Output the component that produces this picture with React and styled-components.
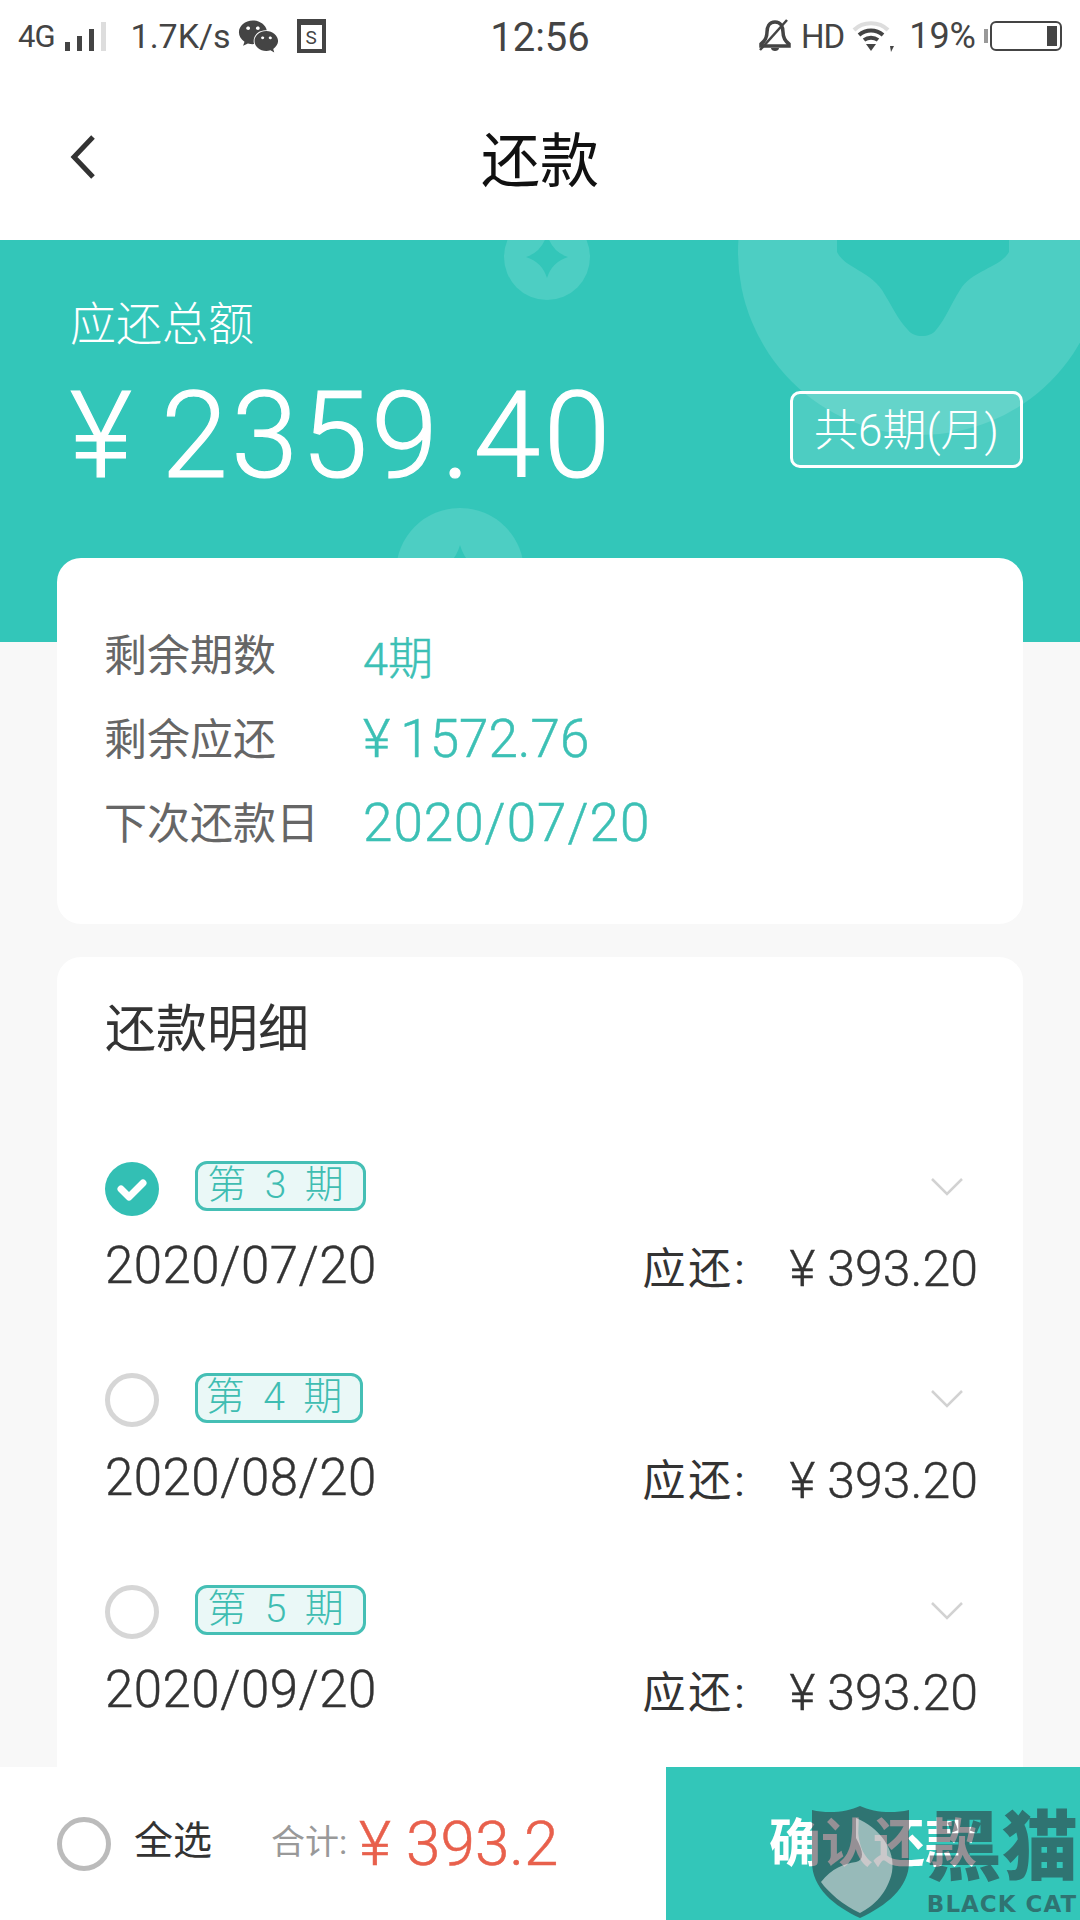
import styled, { createGlobalStyle } from "styled-components";
import { FaWeixin } from "react-icons/fa";

const rows = [
  { period: 3, date: "2020/07/20", checked: true, badge: 171 },
  { period: 4, date: "2020/08/20", checked: false, badge: 168 },
  { period: 5, date: "2020/09/20", checked: false, badge: 171 },
];

const info = [
  { label: "剩余期数", value: "4期", size: 45, spacing: 0 },
  { label: "剩余应还", value: "¥ 1572.76", size: 53, spacing: 0 },
  { label: "下次还款日", value: "2020/07/20", size: 53, spacing: 1 },
];

export default function App() {
  return (
    <Page>
      <GlobalStyle />
      <StatusBar>
        <StatusLeft>
          <Net>4G</Net>
          <Signal>
            <SignalBar $h={9} />
            <SignalBar $h={15} />
            <SignalBar $h={22} />
            <SignalBar $h={29} $off />
          </Signal>
          <Speed>1.7K/s</Speed>
          <FaWeixin size={41} />
          <SimBox>S</SimBox>
        </StatusLeft>
        <Clock>12:56</Clock>
        <StatusRight>
          <BellIcon />
          <Hd>HD</Hd>
          <WifiIcon />
          <Percent>19%</Percent>
          <BatteryNub />
          <Battery>
            <BatteryFill />
          </Battery>
        </StatusRight>
      </StatusBar>

      <Nav>
        <BackIcon />
        <NavTitle>还款</NavTitle>
      </Nav>

      <Hero>
        <HeroDecor />
        <HeroLabel>应还总额</HeroLabel>
        <HeroRow>
          <HeroAmount>¥ 2359.40</HeroAmount>
          <TermTag>共6期(月)</TermTag>
        </HeroRow>
      </Hero>

      <InfoCard>
        {info.map((item) => (
          <InfoRow key={item.label}>
            <InfoLabel>{item.label}</InfoLabel>
            <InfoValue $size={item.size} $spacing={item.spacing}>
              {item.value}
            </InfoValue>
          </InfoRow>
        ))}
      </InfoCard>

      <DetailCard>
        <DetailTitle>还款明细</DetailTitle>
        <List>
          {rows.map((row) => (
            <Row key={row.period}>
              <RowTop>
                {row.checked ? <CheckedIcon /> : <Radio />}
                <Badge $w={row.badge}>第 {row.period} 期</Badge>
                <ChevronIcon />
              </RowTop>
              <RowBottom>
                <RowDate>{row.date}</RowDate>
                <Due>
                  <DueLabel>应还:</DueLabel>
                  <DueAmount>¥ 393.20</DueAmount>
                </Due>
              </RowBottom>
            </Row>
          ))}
        </List>
      </DetailCard>

      <BottomBar>
        <SelectAll>
          <AllRadio />
          <SelectText>全选</SelectText>
        </SelectAll>
        <TotalLabel>合计:</TotalLabel>
        <TotalAmount>¥ 393.2</TotalAmount>
        <ConfirmButton>确认还款</ConfirmButton>
      </BottomBar>

      <Watermark>
        <ShieldIcon />
        <MarkText>
          <MarkName>黑猫</MarkName>
          <MarkLatin>BLACK CAT</MarkLatin>
        </MarkText>
      </Watermark>
    </Page>
  );
}

function BellIcon() {
  return (
    <svg width="34" height="34" viewBox="0 0 34 34" fill="none">
      <path
        d="M17 3C11 3 9 8 9 13C9 19 7 22 3 25V27H31V25C27 22 25 19 25 13C25 8 23 3 17 3Z"
        stroke="#444"
        strokeWidth="3.5"
      />
      <path d="M13 29H21C21 33 13 33 13 29Z" fill="#444" />
      <path d="M29 1L2 31" stroke="#444" strokeWidth="2.5" />
    </svg>
  );
}

function WifiIcon() {
  return (
    <svg width="42" height="34" viewBox="0 0 42 34" fill="none">
      <path d="M2 11C11 2 27 2 36 11" stroke="#ddd" strokeWidth="4" />
      <path d="M7 16C14 10 24 10 31 16" stroke="#444" strokeWidth="4" />
      <path d="M12 21C16 18 22 18 26 21" stroke="#444" strokeWidth="4" />
      <path d="M14 25L24 25L19 32Z" fill="#444" />
      <path d="M38 27L42 27L39 33Z" fill="#444" />
    </svg>
  );
}

function BackIcon() {
  return (
    <BackSvg width="26" height="44" viewBox="0 0 26 44" fill="none">
      <path d="M23 2L4 22L23 42" stroke="#333" strokeWidth="5" />
    </BackSvg>
  );
}

function HeroDecor() {
  return (
    <DecorSvg width="1080" height="402" viewBox="0 0 1080 402">
      <g fill="#4dcec3">
        <circle cx="921" cy="12" r="183" />
        <circle cx="547" cy="17" r="43" />
        <circle cx="460" cy="332" r="64" />
      </g>
      <g fill="#33c6b9">
        <path d="M837 0V12C845 28 868 30 882 50C892 66 898 80 908 90C914 98 930 98 936 90C946 78 950 66 960 50C972 30 1000 28 1009 12V0Z" />
        <path d="M547 -6Q552 12 568 17Q552 22 547 38Q542 22 526 17Q542 12 547 -6Z" />
        <path d="M460 305Q466 326 486 332Q466 338 460 360Q454 338 434 332Q454 326 460 305Z" />
      </g>
    </DecorSvg>
  );
}

function CheckedIcon() {
  return (
    <CheckSvg width="54" height="54" viewBox="0 0 54 54">
      <circle cx="27" cy="27" r="27" fill="#33bfb4" />
      <path d="M16 27L24 35L38 21" fill="none" stroke="#fff" strokeWidth="7" strokeLinecap="round" strokeLinejoin="round" />
    </CheckSvg>
  );
}

function ChevronIcon() {
  return (
    <ChevronSvg width="32" height="18" viewBox="0 0 32 18" fill="none">
      <path d="M1 1L16 16L31 1" stroke="#d2d2d2" strokeWidth="2.5" />
    </ChevronSvg>
  );
}

function ShieldIcon() {
  return (
    <svg width="97" height="112" viewBox="0 0 97 112">
      <path
        d="M0 4C16 8 36 6 48 0C60 6 80 8 97 4V56C97 82 74 100 48 112C22 100 0 82 0 56Z"
        fill="rgba(43,34,44,0.5)"
      />
      <path
        d="M44 12C68 22 84 44 80 66C76 86 62 100 48 107C32 100 16 86 9 76C20 62 32 58 44 56C52 54 52 46 44 32Z"
        fill="rgba(255,255,255,0.5)"
      />
    </svg>
  );
}

const GlobalStyle = createGlobalStyle`
  body {
    margin: 0;
    background: #fff;
    font-family: Roboto, "Noto Sans CJK SC", sans-serif;
  }
`;

const Page = styled.div`
  position: relative;
  width: 1080px;
  height: 1920px;
  display: flex;
  flex-direction: column;
  overflow: hidden;
  background: #f8f8f8;
`;

const StatusBar = styled.div`
  height: 72px;
  padding: 0 18px;
  display: grid;
  grid-template-columns: 1fr auto 1fr;
  align-items: center;
  background: #fff;
  color: #444;
`;

const StatusLeft = styled.div`
  display: flex;
  align-items: center;
`;

const StatusRight = styled.div`
  display: flex;
  align-items: center;
  justify-content: flex-end;
`;

const Net = styled.span`
  font-size: 31px;
  letter-spacing: -1px;
`;

const Signal = styled.div`
  display: flex;
  align-items: flex-end;
  gap: 7px;
  height: 30px;
  margin-left: 10px;
`;

const SignalBar = styled.i`
  width: 5px;
  height: ${(p) => p.$h}px;
  background: ${(p) => (p.$off ? "#ddd" : "#444")};
`;

const Speed = styled.span`
  margin: 0 7px 0 25px;
  font-size: 34px;
`;

const SimBox = styled.span`
  width: 29px;
  height: 34px;
  margin-left: 18px;
  border: 4px solid #444;
  border-top-width: 6px;
  box-sizing: border-box;
  display: flex;
  align-items: center;
  justify-content: center;
  font-size: 19px;
`;

const Clock = styled.span`
  padding-top: 2px;
  font-size: 40px;
`;

const Hd = styled.span`
  margin: 0 8px 0 9px;
  font-size: 33px;
  letter-spacing: -1px;
`;

const Percent = styled.span`
  margin-left: 15px;
  font-size: 36px;
`;

const BatteryNub = styled.i`
  width: 4px;
  height: 14px;
  margin-left: 8px;
  background: #999;
`;

const Battery = styled.div`
  width: 72px;
  height: 30px;
  margin-left: 2px;
  padding: 3px 3px 3px 0;
  border: 2px solid #444;
  border-radius: 6px;
  box-sizing: border-box;
  display: flex;
  justify-content: flex-end;
`;

const BatteryFill = styled.i`
  width: 10px;
  background: #444;
`;

const Nav = styled.div`
  height: 168px;
  position: relative;
  display: flex;
  align-items: center;
  justify-content: center;
  background: #fff;
`;

const BackSvg = styled.svg`
  position: absolute;
  left: 70px;
  top: 63px;
`;

const NavTitle = styled.h1`
  margin: 0;
  font-size: 59px;
  font-weight: 400;
  color: #111;
`;

const Hero = styled.div`
  position: relative;
  height: 402px;
  padding: 58px 57px 0 70px;
  box-sizing: border-box;
  background: #33c6b9;
  color: #fff;
  overflow: hidden;
`;

const DecorSvg = styled.svg`
  position: absolute;
  left: 0;
  top: 0;
`;

const HeroLabel = styled.div`
  position: relative;
  font-size: 46px;
  line-height: 52px;
  font-weight: 300;
`;

const HeroRow = styled.div`
  position: relative;
  margin-top: 23px;
  display: flex;
  align-items: center;
  justify-content: space-between;
`;

const HeroAmount = styled.div`
  padding-top: 3px;
  font-size: 120px;
  line-height: 120px;
  font-weight: 300;
  letter-spacing: 3.5px;
  word-spacing: -7px;
  -webkit-text-stroke: 1.2px #fff;
`;

const TermTag = styled.div`
  width: 233px;
  height: 77px;
  margin-bottom: 10px;
  padding-bottom: 6px;
  border: 3px solid #fff;
  border-radius: 10px;
  box-sizing: border-box;
  display: flex;
  align-items: center;
  justify-content: center;
  background: rgba(255, 255, 255, 0.13);
  font-size: 44px;
  font-weight: 300;
  white-space: nowrap;
`;

const Card = styled.section`
  position: relative;
  margin: 0 57px;
  border-radius: 24px;
  background: #fff;
`;

const InfoCard = styled(Card)`
  height: 366px;
  margin-top: -84px;
  padding: 55px 47px 0;
  box-sizing: border-box;
`;

const InfoRow = styled.div`
  height: 84px;
  display: flex;
  align-items: center;
`;

const InfoLabel = styled.span`
  width: 259px;
  padding-bottom: 7px;
  font-size: 43px;
  color: #666;
`;

const InfoValue = styled.span`
  font-size: ${(p) => p.$size}px;
  font-weight: 300;
  letter-spacing: ${(p) => p.$spacing}px;
  word-spacing: -3px;
  -webkit-text-stroke: 0.5px #3cc0b5;
  color: #3cc0b5;
`;

const DetailCard = styled(Card)`
  flex: 1;
  min-height: 0;
  margin-top: 33px;
  padding: 45px 45px 0 48px;
  border-radius: 24px 24px 0 0;
  overflow: hidden;
`;

const DetailTitle = styled.h2`
  margin: 0;
  font-size: 51px;
  line-height: 56px;
  font-weight: 400;
  color: #333;
`;

const List = styled.div`
  margin-top: 102px;
  display: flex;
  flex-direction: column;
  gap: 72px;
`;

const Row = styled.div`
  display: flex;
  flex-direction: column;
`;

const RowTop = styled.div`
  height: 54px;
  display: flex;
  align-items: center;
  gap: 36px;
`;

const CheckSvg = styled.svg`
  flex: none;
  margin-top: 4px;
`;

const Radio = styled.span`
  width: 54px;
  height: 54px;
  flex: none;
  margin-top: 2px;
  border: 5px solid #d6d6d6;
  border-radius: 50%;
  box-sizing: border-box;
`;

const AllRadio = styled(Radio)`
  margin-top: 0;
  border-color: #bbb;
`;

const Badge = styled.span`
  width: ${(p) => p.$w}px;
  height: 50px;
  margin-top: -3px;
  padding: 0 10px 9px 0;
  border: 3px solid #45bfb5;
  border-radius: 12px;
  box-sizing: border-box;
  display: flex;
  align-items: center;
  justify-content: center;
  background: #eaf8f7;
  font-size: 39px;
  font-weight: 300;
  word-spacing: 9px;
  white-space: pre;
  color: #3fbdb2;
`;

const ChevronSvg = styled.svg`
  margin: 0 15px 0 auto;
`;

const RowBottom = styled.div`
  height: 70px;
  margin-top: 16px;
  display: flex;
  align-items: center;
  justify-content: space-between;
`;

const RowDate = styled.span`
  font-size: 51px;
  font-weight: 300;
  letter-spacing: 0.5px;
  -webkit-text-stroke: 0.4px #333;
  color: #333;
`;

const Due = styled.div`
  padding-top: 8px;
  display: flex;
  align-items: center;
  color: #333;
`;

const DueLabel = styled.span`
  width: 147px;
  padding-bottom: 9px;
  font-size: 43px;
  letter-spacing: 3px;
`;

const DueAmount = styled.span`
  font-size: 50px;
  font-weight: 300;
  -webkit-text-stroke: 0.4px #333;
`;

const BottomBar = styled.div`
  position: relative;
  height: 153px;
  padding-left: 57px;
  display: flex;
  align-items: center;
  background: #fff;
`;

const SelectAll = styled.div`
  width: 214px;
  display: flex;
  align-items: center;
  gap: 23px;
`;

const SelectText = styled.span`
  padding-bottom: 13px;
  font-size: 39px;
  color: #333;
`;

const TotalLabel = styled.span`
  width: 88px;
  padding-bottom: 9px;
  font-size: 34px;
  color: #999;
`;

const TotalAmount = styled.span`
  font-size: 62px;
  font-weight: 300;
  -webkit-text-stroke: 0.5px #e8604c;
  color: #e8604c;
`;

const ConfirmButton = styled.button`
  width: 414px;
  height: 153px;
  margin-left: auto;
  padding: 0 0 8px;
  border: 0;
  background: #33c6b9;
  font-family: inherit;
  font-size: 52px;
  font-weight: 700;
  color: #fff;
`;

const Watermark = styled.div`
  position: absolute;
  right: 2px;
  bottom: 2px;
  display: flex;
  align-items: flex-end;
  gap: 17px;
  color: rgba(43, 34, 44, 0.5);
`;

const MarkText = styled.div`
  display: flex;
  flex-direction: column;
  align-items: center;
  padding-bottom: 2px;
`;

const MarkName = styled.span`
  font-size: 76px;
  line-height: 76px;
  font-weight: 900;
`;

const MarkLatin = styled.span`
  margin-top: 6px;
  font-family: "DejaVu Sans", sans-serif;
  font-size: 23px;
  line-height: 24px;
  font-weight: 700;
  letter-spacing: 1px;
  white-space: nowrap;
`;
